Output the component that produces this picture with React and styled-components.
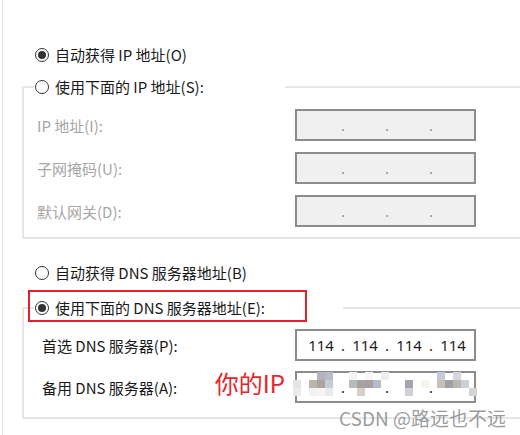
import React from "react";
import styled, { createGlobalStyle } from "styled-components";

const GlobalStyle = createGlobalStyle`
  html, body {
    margin: 0;
    padding: 0;
    background: #fff;
  }
  body {
    font-family: "Noto Sans CJK SC", "Noto Sans", sans-serif;
    color: #1a1a1a;
  }
`;

const Window = styled.div`
  position: relative;
  width: 518px;
  height: 435px;
  margin-left: 2px;
  padding-top: 43px;
  box-sizing: border-box;
  border-left: 1px solid #e4e4e4;
  background: #fff;
  overflow: hidden;
`;

const RadioRow = styled.label`
  display: flex;
  align-items: center;
  gap: 6px;
  height: 24px;
  padding-left: 32px;
  margin-top: ${(p) => p.$mt || 0}px;
`;

const Radio = styled.span`
  flex: none;
  width: 14px;
  height: 14px;
  box-sizing: border-box;
  border: 1px solid #333;
  border-radius: 50%;
  display: grid;
  place-items: center;
  background: #fff;

  &::after {
    content: "";
    width: 8px;
    height: 8px;
    border-radius: 50%;
    background: ${(p) => (p.$checked ? "#333" : "transparent")};
  }
`;

const Caption = styled.span`
  font-size: 15px;
  line-height: 24px;
  white-space: nowrap;
  color: #1a1a1a;
`;

const Group = styled.fieldset`
  margin: ${(p) => p.$mt}px 0 0 19px;
  padding: 0 44px ${(p) => p.$pb}px 0;
  min-width: 0;
  border: 2px solid #e6e6e6;
  border-right: none;
`;

const Legend = styled.legend`
  position: relative;
  margin-left: 10px;
  padding: 0 0 0 1px;
  width: ${(p) => p.$w}px;
  height: 24px;
  box-sizing: border-box;

  ${(p) =>
    p.$marked &&
    `
    &::after {
      content: "";
      position: absolute;
      left: -6px;
      top: -6px;
      width: 279px;
      height: 32px;
      box-sizing: border-box;
      border: 2px solid #e8202a;
    }
  `}
`;

const LegendInner = styled.span`
  display: flex;
  align-items: center;
  gap: 6px;
  height: 24px;
`;

const Rows = styled.div`
  display: flex;
  flex-direction: column;
  gap: ${(p) => p.$gap}px;
  padding-top: ${(p) => p.$pt}px;
`;

const Row = styled.div`
  display: flex;
  align-items: center;
  height: 32px;
  padding-left: ${(p) => p.$indent}px;
`;

const LabelCell = styled.div`
  flex: 1;
  display: flex;
  align-items: center;
  justify-content: space-between;
  min-width: 0;
`;

const FieldLabel = styled.span`
  font-size: 15px;
  white-space: nowrap;
  color: ${(p) => (p.$muted ? "#a6a6a6" : "#1a1a1a")};
`;

const Note = styled.span`
  font-size: 24px;
  line-height: 1;
  color: #e8232a;
  margin: 0 10px 8px 0;
  white-space: nowrap;
`;

const IpField = styled.div`
  position: relative;
  flex: none;
  width: 181px;
  height: 32px;
  box-sizing: border-box;
  border: 2px solid #8c8c8c;
  background: ${(p) => (p.$disabled ? "#f0f0f0" : "#fff")};
  display: flex;
  align-items: center;
  padding-left: 6px;
`;

const Octet = styled.span`
  width: 36px;
  text-align: center;
  font-family: "Noto Sans", sans-serif;
  font-size: 15px;
  color: #1e1e1e;
`;

const Dot = styled.span`
  width: 8px;
  text-align: center;
  font-family: "Noto Sans", sans-serif;
  font-size: 15px;
  color: ${(p) => (p.$disabled ? "#8a94a4" : "#1e1e1e")};
`;

const Mosaic = styled.svg`
  position: absolute;
  left: -4px;
  top: -1px;
`;

const Watermark = styled.div`
  position: absolute;
  right: 14px;
  bottom: 5px;
  font-size: 19px;
  line-height: 1.2;
  color: rgba(128, 128, 128, 0.78);
  white-space: nowrap;
`;

const blocks = [
  [0, 3, "#b4b2c0"], [0, 4, "#b8bcc8"], [0, 7, "#f4f4f4"], [0, 9, "#f6f6f6"],
  [0, 11, "#eeeeee"], [0, 18, "#c4cad4"], [0, 20, "#d4d6de"],
  [1, 0, "#e4e4e4"], [1, 2, "#bab4ac"], [1, 3, "#aaa49c"], [1, 4, "#c4ccd4"],
  [1, 7, "#b4bcbc"], [1, 8, "#a8a2a2"], [1, 9, "#a6a0a0"], [1, 10, "#b4bccc"],
  [1, 14, "#a4a4ac"], [1, 16, "#f8f4ec"], [1, 18, "#c8c0b8"], [1, 19, "#a0a0a0"],
  [1, 20, "#b8b8b0"], [1, 21, "#c8d0d8"],
  [2, 0, "#ebebeb"], [2, 2, "#f2f2f2"], [2, 3, "#f5f5f5"], [2, 4, "#eaeaf0"],
  [2, 8, "#d8d0c8"], [2, 14, "#d0d0d8"], [2, 22, "#d4d4d4"],
];

const IpInput = ({ value, disabled, blurred }) => {
  const parts = value ? value.split(".") : ["", "", "", ""];
  return (
    <IpField $disabled={disabled}>
      {parts.map((part, i) => (
        <React.Fragment key={i}>
          {i > 0 && <Dot $disabled={disabled}>.</Dot>}
          <Octet>{part}</Octet>
        </React.Fragment>
      ))}
      {blurred && (
        <Mosaic width="184" height="24" viewBox="0 0 184 24">
          {blocks.map(([r, c, color], i) => (
            <rect key={i} x={c * 8} y={r * 8} width="8" height="8" fill={color} />
          ))}
        </Mosaic>
      )}
    </IpField>
  );
};

const App = () => {
  return (
    <>
      <GlobalStyle />
      <Window>
        <RadioRow>
          <Radio $checked />
          <Caption>自动获得 IP 地址(O)</Caption>
        </RadioRow>

        <Group $mt={8} $pb={10}>
          <Legend $w={251}>
            <LegendInner>
              <Radio />
              <Caption>使用下面的 IP 地址(S):</Caption>
            </LegendInner>
          </Legend>
          <Rows $gap={11} $pt={10}>
            <Row $indent={13}>
              <LabelCell>
                <FieldLabel $muted>IP 地址(I):</FieldLabel>
              </LabelCell>
              <IpInput disabled />
            </Row>
            <Row $indent={13}>
              <LabelCell>
                <FieldLabel $muted>子网掩码(U):</FieldLabel>
              </LabelCell>
              <IpInput disabled />
            </Row>
            <Row $indent={13}>
              <LabelCell>
                <FieldLabel $muted>默认网关(D):</FieldLabel>
              </LabelCell>
              <IpInput disabled />
            </Row>
          </Rows>
        </Group>

        <RadioRow $mt={22}>
          <Radio />
          <Caption>自动获得 DNS 服务器地址(B)</Caption>
        </RadioRow>

        <Group $mt={11} $pb={14}>
          <Legend $w={309} $marked>
            <LegendInner>
              <Radio $checked />
              <Caption>使用下面的 DNS 服务器地址(E):</Caption>
            </LegendInner>
          </Legend>
          <Rows $gap={10} $pt={9}>
            <Row $indent={18}>
              <LabelCell>
                <FieldLabel>首选 DNS 服务器(P):</FieldLabel>
              </LabelCell>
              <IpInput value="114.114.114.114" />
            </Row>
            <Row $indent={18}>
              <LabelCell>
                <FieldLabel>备用 DNS 服务器(A):</FieldLabel>
                <Note>你的IP</Note>
              </LabelCell>
              <IpInput blurred />
            </Row>
          </Rows>
        </Group>

        <Watermark>CSDN @路远也不远</Watermark>
      </Window>
    </>
  );
};

export default App;
